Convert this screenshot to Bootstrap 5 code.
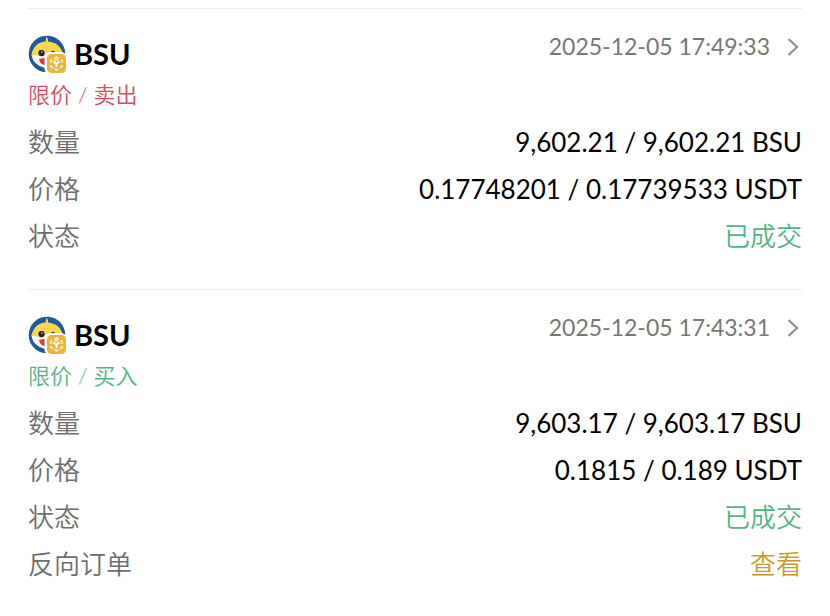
<!DOCTYPE html>
<html lang="zh-CN">
<head>
<meta charset="utf-8">
<meta name="viewport" content="width=device-width, initial-scale=1">
<title>BSU 订单</title>
<link href="https://cdn.jsdelivr.net/npm/bootstrap@5.3.0/dist/css/bootstrap.min.css" rel="stylesheet">
<style>
body { font-family: Lato, "Noto Sans CJK SC", sans-serif; background: #fff; color: #000; }
.orders { padding: 8px 28px 0; }
.order { border-top: 1px solid #ececec; padding: 26px 0 29px; }
.order-head { min-height: 38px; }
.coin { width: 38px; height: 38px; }
.pair { font-size: 29px; line-height: 38px; font-weight: 700; }
.order-time { font-size: 23px; line-height: 22px; color: #777; gap: 14px; }
.chevron { width: 18px; height: 24px; }
.side { font-size: 22px; line-height: 43px; margin-bottom: 3px; }
.line { font-size: 26px; line-height: 47px; }
.line dt { color: #6e6e6e; font-weight: 350; }
.sell { color: #dc4a5d; font-weight: 350; }
.buy { color: #54b486; font-weight: 350; }
.view-link { color: #c99a2c; font-weight: 350; }
</style>
</head>
<body>
<svg class="position-absolute" width="0" height="0" aria-hidden="true">
  <clipPath id="disc"><circle cx="19" cy="19" r="18.300"/></clipPath>
  <symbol id="coin" viewBox="0 0 38 38">
    <g clip-path="url(#disc)">
      <rect width="38" height="38" fill="#21599b"/>
      <path d="M3.500 20C6 10 12 7 18 7C27 7 33 12 35 20L30 30L17 33Q5 30 3.500 20Z" fill="#fff7f0"/>
      <path d="M3.500 20C5 11 11 7 17.500 6.500L18.500 1.500Q20 3 20 6.500C28 7 33 12 35 19L29 20Q26 17 19 19Q15 21 10 21Q6 19 3.500 20Z" fill="#f7d84a"/>
      <path d="M11 24L18 22.500V30Q12 30 11 24Z" fill="#d83848"/>
    </g>
    <circle cx="13.500" cy="18" r="4" fill="#fff3c0"/>
    <circle cx="13.500" cy="18" r="3.200" fill="#3b2018"/>
    <circle cx="14" cy="17" r=".7" fill="#fff"/>
    <path d="M22.500 17.500Q25 14 27.500 17.500Z" fill="#3b2018"/>
    <rect x="16.500" y="17" width="22" height="22" rx="5.500" fill="#fff"/>
    <rect x="19" y="19" width="19" height="19" rx="4.500" fill="#e7b83f"/>
    <g fill="none" stroke="#fff9e8" stroke-width="1.300">
      <path d="M26.300 23.400L28.500 22.100L30.700 23.400M32.700 24.500L34.100 25.400V28M34.100 30V31.500L32 32.900M30.300 33.900L28.500 35L26.700 33.900M25 32.900L22.900 31.500V30M22.900 28V25.400L24.300 24.500"/>
      <path d="M25.200 26.500L28.500 28.500L31.800 26.500M28.500 28.500V32.200" stroke-width="2"/>
      <path d="M26.500 25.500L28.500 24.500L30.500 25.500"/>
    </g>
  </symbol>
  <symbol id="next" viewBox="0 0 18 24">
    <path d="M4.500 4L13 12L4.500 20" fill="none" stroke="#929292" stroke-width="2.300"/>
  </symbol>
</svg>

<main class="orders">
  <article class="order">
    <header class="order-head d-flex justify-content-between align-items-start">
      <div class="d-flex align-items-center gap-2">
        <svg class="coin" aria-hidden="true"><use href="#coin"/></svg>
        <h2 class="pair mb-0">BSU</h2>
      </div>
      <a href="#" class="order-time d-flex text-decoration-none">
        <time datetime="2025-12-05T17:49:33">2025-12-05 17:49:33</time>
        <svg class="chevron" aria-hidden="true"><use href="#next"/></svg>
      </a>
    </header>
    <div class="side sell">限价 / 卖出</div>
    <dl class="mb-0">
      <div class="line d-flex justify-content-between"><dt>数量</dt><dd class="mb-0">9,602.21 / 9,602.21 BSU</dd></div>
      <div class="line d-flex justify-content-between"><dt>价格</dt><dd class="mb-0">0.17748201 / 0.17739533 USDT</dd></div>
      <div class="line d-flex justify-content-between"><dt>状态</dt><dd class="mb-0 buy">已成交</dd></div>
    </dl>
  </article>

  <article class="order pb-0">
    <header class="order-head d-flex justify-content-between align-items-start">
      <div class="d-flex align-items-center gap-2">
        <svg class="coin" aria-hidden="true"><use href="#coin"/></svg>
        <h2 class="pair mb-0">BSU</h2>
      </div>
      <a href="#" class="order-time d-flex text-decoration-none">
        <time datetime="2025-12-05T17:43:31">2025-12-05 17:43:31</time>
        <svg class="chevron" aria-hidden="true"><use href="#next"/></svg>
      </a>
    </header>
    <div class="side buy">限价 / 买入</div>
    <dl class="mb-0">
      <div class="line d-flex justify-content-between"><dt>数量</dt><dd class="mb-0">9,603.17 / 9,603.17 BSU</dd></div>
      <div class="line d-flex justify-content-between"><dt>价格</dt><dd class="mb-0">0.1815 / 0.189 USDT</dd></div>
      <div class="line d-flex justify-content-between"><dt>状态</dt><dd class="mb-0 buy">已成交</dd></div>
      <div class="line d-flex justify-content-between"><dt>反向订单</dt><dd class="mb-0"><a href="#" class="view-link text-decoration-none">查看</a></dd></div>
    </dl>
  </article>
</main>
<script src="https://cdn.jsdelivr.net/npm/bootstrap@5.3.0/dist/js/bootstrap.bundle.min.js"></script>
</body>
</html>
